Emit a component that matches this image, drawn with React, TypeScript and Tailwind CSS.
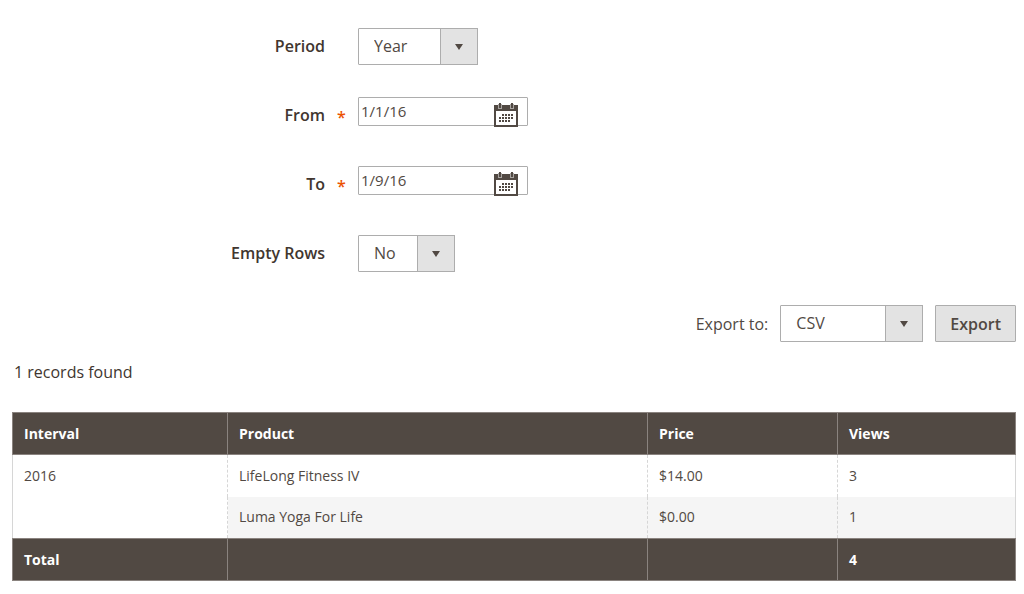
import { useState, type ReactNode } from 'react';
import clsx from 'clsx';

interface SelectBoxProps {
  id: string;
  className: string;
  options: string[];
}

function SelectBox({ id, className, options }: SelectBoxProps) {
  return (
    <div className={clsx('relative h-[37px]', className)}>
      <select
        id={id}
        className="h-full w-full appearance-none rounded-[1px] border border-[#adadad] bg-white pb-[2px] pl-[15px] pr-10 text-base text-[#514943] outline-none focus:border-[#007bdb]"
      >
        {options.map((option) => (
          <option key={option}>{option}</option>
        ))}
      </select>
      <span className="pointer-events-none absolute inset-y-0 right-0 flex w-[38px] items-center justify-center border border-[#adadad] bg-[#e3e3e3]">
        <svg width="8" height="6" viewBox="0 0 8 6" fill="#514943" aria-hidden="true">
          <path d="M0 0h8L4 6z" />
        </svg>
      </span>
    </div>
  );
}

function CalendarIcon() {
  return (
    <svg width="24" height="24" viewBox="0 0 24 24" fill="#514943" aria-hidden="true">
      <path d="M0 2h24v22H0zM2 8v14h20V8z" fillRule="evenodd" />
      <path d="M4 1h4v5H4zM16 1h4v5h-4z" fill="#a8a4a1" />
      <path d="M5 0h2v5H5zM17 0h2v5h-2z" />
      <path d="M8 11h2v2H8zM11 11h2v2h-2zM14 11h2v2h-2zM17 11h2v2h-2z" />
      <path d="M5 14h2v2H5zM8 14h2v2H8zM11 14h2v2h-2zM14 14h2v2h-2zM17 14h2v2h-2z" />
      <path d="M5 17h2v2H5zM8 17h2v2H8zM11 17h2v2h-2zM14 17h2v2h-2z" />
    </svg>
  );
}

function DateInput({ id, initial }: { id: string; initial: string }) {
  const [value, setValue] = useState(initial);

  return (
    <div className="relative h-[29px] w-[170px]">
      <input
        id={id}
        type="text"
        required
        value={value}
        onChange={(e) => setValue(e.target.value)}
        className="h-full w-full rounded-[1px] border border-[#adadad] bg-white pb-[2px] pl-[2px] pr-9 text-[15px] text-[#514943] outline-none focus:border-[#007bdb]"
      />
      <button type="button" aria-label="Select date" className="absolute right-[10px] top-[6px]">
        <CalendarIcon />
      </button>
    </div>
  );
}

interface FieldProps {
  id: string;
  label: string;
  required?: boolean;
  children: ReactNode;
}

function Field({ id, label, required, children }: FieldProps) {
  return (
    <div className="flex h-[37px] items-start">
      <label htmlFor={id} className="w-[313px] text-right font-semibold leading-[37px]">
        {label}
      </label>
      <span className="w-[33px] text-center text-base font-semibold leading-[41px] text-[#eb5202]" aria-hidden="true">
        {required && '*'}
      </span>
      {children}
    </div>
  );
}

const columns = ['Interval', 'Product', 'Price', 'Views'];

const products = [
  { name: 'LifeLong Fitness IV', price: '$14.00', views: 3 },
  { name: 'Luma Yoga For Life', price: '$0.00', views: 1 },
];

const darkCell = 'h-[42px] border border-[#8a837f] bg-[#514943] px-[11px] text-left font-bold text-white';
const bodyCell = 'h-[42px] border-l border-dashed border-[#d6d6d6] px-[11px]';

function ReportTable() {
  return (
    <table className="w-full table-fixed border-collapse border border-[#d6d6d6] text-sm text-[#514943]">
      <colgroup>
        <col className="w-[215px]" />
        <col />
        <col className="w-[190px]" />
        <col className="w-[178px]" />
      </colgroup>
      <thead>
        <tr>
          {columns.map((column) => (
            <th key={column} scope="col" className={darkCell}>
              {column}
            </th>
          ))}
        </tr>
      </thead>
      <tbody>
        {products.map((product, i) => (
          <tr key={product.name} className="even:bg-[#f5f5f5]">
            {i === 0 && (
              <td rowSpan={products.length} className="bg-white px-[11px] pt-[11px] align-top">
                2016
              </td>
            )}
            <td className={bodyCell}>{product.name}</td>
            <td className={bodyCell}>{product.price}</td>
            <td className={bodyCell}>{product.views}</td>
          </tr>
        ))}
      </tbody>
      <tfoot>
        <tr>
          <th scope="row" className={darkCell}>
            Total
          </th>
          <td className={darkCell} />
          <td className={darkCell} />
          <td className={darkCell}>4</td>
        </tr>
      </tfoot>
    </table>
  );
}

export default function App() {
  return (
    <main className="min-h-screen bg-white pb-3 pl-3 pr-2 pt-7 font-['Open_Sans',sans-serif] text-base text-[#41362f]">
      <form className="flex flex-col gap-8">
        <Field id="period" label="Period">
          <SelectBox id="period" className="w-[120px]" options={['Year', 'Month', 'Day']} />
        </Field>
        <Field id="from" label="From" required>
          <DateInput id="from" initial="1/1/16" />
        </Field>
        <Field id="to" label="To" required>
          <DateInput id="to" initial="1/9/16" />
        </Field>
        <Field id="empty-rows" label="Empty Rows">
          <SelectBox id="empty-rows" className="w-[97px]" options={['No', 'Yes']} />
        </Field>
      </form>

      <div className="mt-[33px] flex items-center justify-end text-[#514943]">
        <label htmlFor="export-to" className="mr-3">
          Export to:
        </label>
        <SelectBox id="export-to" className="w-[143px]" options={['CSV', 'Excel XML']} />
        <button
          type="button"
          className="ml-3 h-[37px] rounded-[1px] border border-[#adadad] bg-[#e3e3e3] px-[14px] font-semibold hover:bg-[#dbdbdb]"
        >
          Export
        </button>
      </div>

      <p className="mb-[30px] mt-5 pl-[2px] leading-5">1 records found</p>

      <ReportTable />
    </main>
  );
}
